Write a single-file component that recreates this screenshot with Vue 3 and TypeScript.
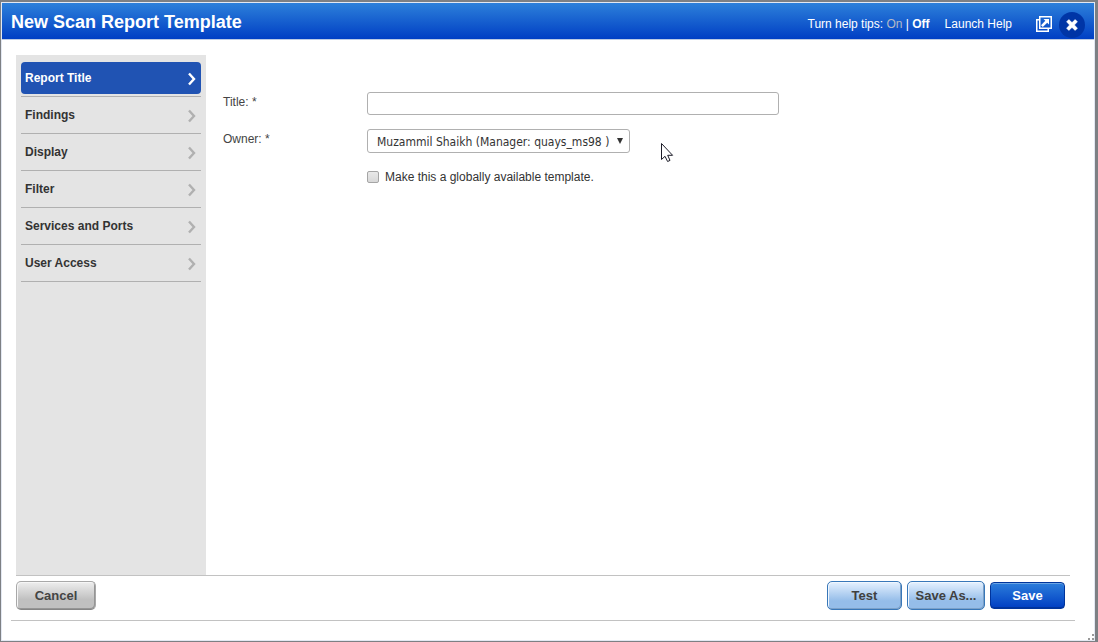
<script setup lang="ts">
import { ref } from 'vue'

const sections: string[] = ['Report Title', 'Findings', 'Display', 'Filter', 'Services and Ports', 'User Access']
const active = ref<string>('Report Title')
const title = ref<string>('')
const owner = ref<string>('quays_ms98')
const isGlobal = ref<boolean>(false)
const tips = ref<boolean>(false)
</script>

<template>
  <div class="frame">
    <div class="dialog">
      <header class="bar">
        <h1>New Scan Report Template</h1>
        <div class="tips">
          Turn help tips:
          <button type="button" :class="{ chosen: tips }" @click="tips = true">On</button>
          |
          <button type="button" :class="{ chosen: !tips }" @click="tips = false">Off</button>
        </div>
        <a class="help" href="#help">Launch Help</a>
        <button type="button" class="popout" aria-label="Open in new window">
          <svg width="16" height="16" viewBox="0 0 16 16" fill="none" stroke="#fff">
            <path d="M3 3.75H.75V15.25H12.25V13" stroke-width="1.5" />
            <path d="M3.75 .75H15.25V12.25H3.75Z" stroke-width="1.5" />
            <path d="M7.5 3H13V8.5L11.2 6.7L6.8 11L5 9.2L9.3 4.8Z" fill="#fff" stroke="none" />
          </svg>
        </button>
        <button type="button" class="close" aria-label="Close">
          <svg width="12" height="12" viewBox="0 0 12 12">
            <path d="M.6 2.8L2.8 .6L6 3.6L9.2 .6L11.4 2.8L8.4 6L11.4 9.2L9.2 11.4L6 8.4L2.8 11.4L.6 9.2L3.6 6Z" fill="#fff" stroke="#fff" stroke-width=".6" />
          </svg>
        </button>
      </header>

      <div class="content">
        <nav class="side">
          <ul>
            <li v-for="s in sections" :key="s">
              <button type="button" :class="{ active: s === active }" @click="active = s">
                <span>{{ s }}</span>
                <svg width="8" height="14" viewBox="0 0 8 14" fill="none" stroke="currentColor" stroke-width="2.4">
                  <path d="M1 1.5L6 7L1 12.5" />
                </svg>
              </button>
            </li>
          </ul>
        </nav>

        <form class="fields" @submit.prevent>
          <div class="row">
            <label for="title">Title: *</label>
            <input id="title" v-model="title" type="text" />
          </div>
          <div class="row">
            <label for="owner">Owner: *</label>
            <div class="picker">
              <select id="owner" v-model="owner">
                <option value="quays_ms98">Muzammil Shaikh (Manager: quays_ms98 )</option>
              </select>
              <svg width="6" height="6" viewBox="0 0 6 6"><path d="M0 0H6L3 6Z" fill="#333" /></svg>
            </div>
          </div>
          <div class="check">
            <input id="global" v-model="isGlobal" type="checkbox" />
            <label for="global">Make this a globally available template.</label>
          </div>
        </form>
      </div>

      <footer class="actions">
        <button type="button" class="btn cancel">Cancel</button>
        <button type="button" class="btn light">Test</button>
        <button type="button" class="btn light tight">Save As...</button>
        <button type="button" class="btn save">Save</button>
      </footer>
      <hr class="rule" />
      <svg class="grip" width="6" height="6" viewBox="0 0 6 6" fill="#999">
        <path d="M4 0h2v2h-2zM4 4h2v2h-2zM0 4h2v2h-2z" />
      </svg>
      <svg class="cursor" width="13" height="20" viewBox="0 0 13 20">
        <path d="M.5 .5V16.5L4 13.3L6.6 18.5L9 17.4L6.7 12.3H11.6Z" fill="#fff" stroke="#1c1c28" stroke-width="1" />
      </svg>
    </div>
  </div>
</template>

<style>
body {
  margin: 0;
}
</style>

<style scoped>
* {
  box-sizing: border-box;
}
.frame {
  min-height: 100vh;
  display: flex;
  padding: 2px 3px 1px 1px;
  background: #7d8084;
  font: 12px/16px "Liberation Sans", Arial, sans-serif;
  color: #333;
}
.dialog {
  position: relative;
  flex: 1;
  display: flex;
  flex-direction: column;
  border: 1px solid #e3e8f2;
  background: #fff;
}
button {
  font: inherit;
  color: inherit;
  border: 0;
  padding: 0;
  background: none;
  cursor: pointer;
}
.bar {
  display: flex;
  align-items: center;
  height: 37px;
  padding: 0 9px;
  color: #fff;
  background: linear-gradient(#2d80da, #003fc4);
  border-bottom: 1px solid #bccbe4;
}
h1 {
  flex: 1;
  margin: 2px 0 0;
  font-size: 18px;
  line-height: 20px;
}
.tips {
  margin-top: 6px;
}
.tips button {
  color: #b4bac6;
}
.tips .chosen {
  color: #fff;
  font-weight: bold;
}
.help {
  margin: 6px 24px 0 15px;
  color: #fff;
  text-decoration: none;
}
.popout {
  height: 16px;
  margin-top: 6px;
}
.popout svg,
.close svg {
  display: block;
}
.close {
  display: grid;
  place-items: center;
  width: 26px;
  height: 26px;
  margin: 7px 0 0 7px;
  border-radius: 50%;
  background: #0035a6;
}
.content {
  flex: 1;
  display: flex;
  margin: 15px 24px 0 14px;
  border-bottom: 1px solid #c2c2c2;
}
.side {
  width: 190px;
  padding: 5px;
  background: #e4e4e4;
}
ul {
  list-style: none;
  margin: 0;
  padding: 0;
}
li {
  padding: 2px 0;
  border-bottom: 1px solid #b0b0b0;
}
li button {
  display: flex;
  align-items: center;
  justify-content: space-between;
  width: 100%;
  height: 32px;
  padding: 0 5px 0 4px;
  border-radius: 4px;
  font-weight: bold;
}
li svg {
  margin-top: 2px;
  color: #b0b0b0;
}
.active {
  color: #fff;
  background: #2053b3;
}
.active svg {
  color: #fff;
}
.fields {
  flex: 1;
  padding: 37px 0 0 17px;
}
.row {
  display: flex;
  height: 37px;
}
.row label {
  width: 144px;
  padding-top: 2px;
  color: #444;
}
.row input {
  width: 412px;
  height: 23px;
  padding: 0 8px;
  border: 1px solid #b0b0b0;
  border-radius: 3px;
  font: inherit;
}
.picker {
  position: relative;
  width: 263px;
  height: 24px;
}
select {
  appearance: none;
  width: 100%;
  height: 100%;
  padding: 1px 20px 0 9px;
  border: 1px solid #b0b0b0;
  border-radius: 3px;
  background: #fff;
  color: #333;
  font: 12px/16px "DejaVu Sans Condensed", "Noto Sans", sans-serif;
}
.picker svg {
  position: absolute;
  right: 7px;
  top: 9px;
  pointer-events: none;
}
.check {
  display: flex;
  align-items: center;
  gap: 6px;
  margin: 3px 0 0 144px;
}
.check input {
  appearance: none;
  width: 12px;
  height: 12px;
  margin: 0;
  border: 1px solid #a5a5a5;
  border-radius: 2px;
  background: linear-gradient(#e9e9e9, #d8d8d8);
}
.check input:checked {
  background: #2053b3;
}
.actions {
  display: flex;
  gap: 5px;
  margin: 5px 29px 0 14px;
}
.btn {
  width: 75px;
  height: 29px;
  border-radius: 5px;
  font-size: 13px;
  font-weight: bold;
}
.cancel {
  width: 80px;
  margin-right: auto;
  color: #444;
  border: 1px solid #a8a8a8;
  border-bottom-color: #858585;
  box-shadow: inset -1px -1px 0 #959595, inset 1px 1px 0 #f6f6f6;
  background: linear-gradient(#eee, #c0c0c0 65%, #c0c0c0);
}
.light {
  color: #404040;
  border: 1px solid #3877b8;
  box-shadow: inset -1px -1px 0 #7ba0c8, inset 1px 1px 0 #f0f7ff;
  background: linear-gradient(#e5f1ff, #95bde9 70%, #95bde9);
}
.tight {
  width: 78px;
}
.save {
  height: 27px;
  margin-top: 1px;
  color: #fff;
  border: 1px solid #00349c;
  border-radius: 4px;
  box-shadow: inset 0 1px 0 #6ca5e4, inset 0 -1px 0 #00349c;
  background: linear-gradient(#2c7ddb, #003fc3);
}
.rule {
  align-self: stretch;
  margin: 10px 19px 19px 9px;
  border: 0;
  border-top: 1px solid #c2c2c2;
}
.grip {
  position: absolute;
  right: 0;
  bottom: 0;
}
.cursor {
  position: absolute;
  left: 659px;
  top: 140px;
  pointer-events: none;
}
</style>
